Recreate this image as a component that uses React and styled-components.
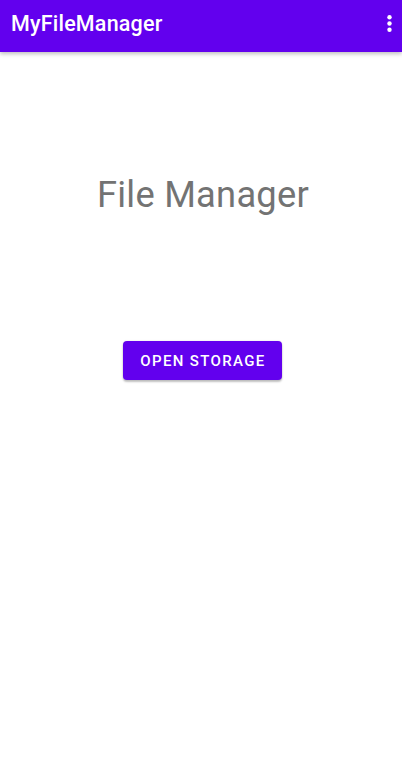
import React from "react";
import styled, { createGlobalStyle } from "styled-components";

const GlobalStyle = createGlobalStyle`
  html, body {
    margin: 0;
    padding: 0;
    background: #ffffff;
    font-family: Roboto, "Noto Sans", sans-serif;
  }
`;

const Screen = styled.div`
  width: 402px;
  height: 768px;
  display: flex;
  flex-direction: column;
  background: #fff;
  overflow: hidden;
`;

const AppBar = styled.header`
  height: 52px;
  background: #6200ee;
  display: flex;
  align-items: center;
  justify-content: space-between;
  padding: 0 0 0 11px;
  box-shadow: 0 2px 4px rgba(0, 0, 0, 0.25);
  position: relative;
  z-index: 1;
`;

const Title = styled.h1`
  margin: 0;
  color: #fff;
  font-size: 21.5px;
  font-weight: 500;
  letter-spacing: 0.2px;
  margin-top: -6px;
`;

const MenuButton = styled.button`
  width: 26px;
  height: 52px;
  border: none;
  background: transparent;
  padding: 0;
  display: flex;
  align-items: center;
  justify-content: center;
  margin-top: -6px;
`;

const Content = styled.main`
  flex: 1;
  display: flex;
  flex-direction: column;
  align-items: center;
`;

const Heading = styled.h2`
  margin: 119px 0 0;
  padding-left: 4px;
  font-size: 36.3px;
  font-weight: 400;
  color: #737373;
  line-height: 48px;
  letter-spacing: 0.25px;
`;

const OpenButton = styled.button`
  margin-top: 122px;
  margin-left: 2px;
  width: 159px;
  height: 39px;
  border: none;
  border-radius: 4px;
  background: #6200ee;
  color: #fff;
  font-family: Roboto, sans-serif;
  font-size: 15px;
  font-weight: 500;
  letter-spacing: 1.35px;
  text-transform: uppercase;
  padding: 0 0 0 2px;
  box-shadow: 0 2px 2px rgba(0, 0, 0, 0.24), 0 0 2px rgba(0, 0, 0, 0.12);
`;

export default function App() {
  return (
    <Screen>
      <GlobalStyle />
      <AppBar>
        <Title>MyFileManager</Title>
        <MenuButton aria-label="More options">
          <svg width="5" height="17" viewBox="0 0 5 17">
            <circle cx="2.5" cy="2.2" r="2.2" fill="#fff" />
            <circle cx="2.5" cy="8.5" r="2.2" fill="#fff" />
            <circle cx="2.5" cy="14.8" r="2.2" fill="#fff" />
          </svg>
        </MenuButton>
      </AppBar>
      <Content>
        <Heading>File Manager</Heading>
        <OpenButton>Open Storage</OpenButton>
      </Content>
    </Screen>
  );
}
